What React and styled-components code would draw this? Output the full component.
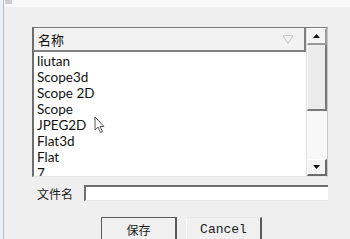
import React from 'react'
import styled, { createGlobalStyle } from 'styled-components'

const Global = createGlobalStyle`
  html, body { margin: 0; padding: 0; }
  body { width: 350px; height: 239px; overflow: hidden; background: #f0f0f0; }
`

const items = ['liutan', 'Scope3d', 'Scope 2D', 'Scope', 'JPEG2D', 'Flat3d', 'Flat', '7']

export default function App() {
  return (
    <Window>
      <Global />
      <TitleStrip>
        <TitleIcon />
      </TitleStrip>
      <Body>
        <ListBox>
          <ListMain>
            <Header>
              <span>名称</span>
              <SortMark viewBox="0 0 12 10">
                <path d="M1 1 L11 1 L6 9 Z" fill="none" stroke="#c4c4c4" strokeWidth="1" />
              </SortMark>
            </Header>
            <Rows>
              {items.map((name) => (
                <Row key={name}>{name}</Row>
              ))}
            </Rows>
          </ListMain>
          <ScrollBar>
            <ArrowBtn>
              <svg width="7" height="4" viewBox="0 0 7 4"><path d="M0 4 L3.5 0 L7 4 Z" fill="#111" /></svg>
            </ArrowBtn>
            <Thumb />
            <Track />
            <ArrowBtn down>
              <svg width="7" height="4" viewBox="0 0 7 4"><path d="M0 0 L3.5 4 L7 0 Z" fill="#111" /></svg>
            </ArrowBtn>
          </ScrollBar>
          <Cursor viewBox="0 0 12 18">
            <path d="M1 1 L1 14 L4 11 L6.5 16.5 L8.5 15.5 L6 10.5 L10 10.5 Z" fill="#fff" stroke="#555" strokeWidth="1" strokeLinejoin="round" />
          </Cursor>
        </ListBox>
        <FileRow>
          <Label>文件名</Label>
          <FileInput />
        </FileRow>
        <Buttons>
          <Button primary>保存</Button>
          <Button mono>Cancel</Button>
        </Buttons>
      </Body>
    </Window>
  )
}

const Window = styled.div`
  width: 347px;
  height: 239px;
  background: #efefef;
  border-left: 1px solid #9cc3de;
  margin-left: 3px;
  box-sizing: border-box;
  overflow: hidden;
`

const TitleStrip = styled.div`
  height: 7px;
  background: #f9f9f9;
  position: relative;
`

const TitleIcon = styled.div`
  position: absolute;
  left: 1px;
  top: 0;
  width: 7px;
  height: 4px;
  background: #cfcfcf;
`

const Body = styled.div`
  padding: 20px 22px 0 28px;
`

const ListBox = styled.div`
  position: relative;
  display: flex;
  height: 150px;
  background: #fff;
  border-top: 1px solid #7a7a7a;
  border-left: 2px solid #6e6e6e;
  border-right: 1px solid #c8c8c8;
  border-bottom: 1px solid #e4e4e4;
  box-sizing: border-box;
`

const ListMain = styled.div`
  flex: 1;
  display: flex;
  flex-direction: column;
  overflow: hidden;
`

const Header = styled.div`
  height: 24px;
  flex: none;
  display: flex;
  align-items: center;
  justify-content: space-between;
  padding: 0 10px 0 4px;
  background: #f2f2f2;
  border-bottom: 2px solid #808080;
  border-right: 2px solid #808080;
  box-sizing: border-box;
  font: 13px "Noto Sans CJK SC", sans-serif;
  color: #111;
`

const SortMark = styled.svg`
  width: 12px;
  height: 11px;
`

const Rows = styled.div`
  padding: 1px 0 0 3px;
`

const Row = styled.div`
  height: 16px;
  font: 13.5px/16px Lato, "Open Sans", sans-serif;
  color: #111;
  white-space: nowrap;
`

const ScrollBar = styled.div`
  width: 20px;
  flex: none;
  display: flex;
  flex-direction: column;
  background: #f6f6f6;
  border-left: 1px solid #e0e0e0;
`

const ArrowBtn = styled.div`
  height: 17px;
  flex: none;
  display: flex;
  align-items: center;
  justify-content: center;
  background: #f4f4f4;
  box-sizing: border-box;
  border: 1px solid #fff;
  border-right: 2px solid ${(p) => (p.down ? '#6a6a6a' : '#9a9a9a')};
  border-bottom: 2px solid ${(p) => (p.down ? '#6a6a6a' : '#9a9a9a')};
`

const Thumb = styled.div`
  height: 66px;
  flex: none;
  background: #ececec;
  box-sizing: border-box;
  border-right: 2px solid #787878;
  border-bottom: 2px solid #787878;
  border-left: 1px solid #fff;
`

const Track = styled.div`
  flex: 1;
  background: #f8f8f8;
`

const Cursor = styled.svg`
  position: absolute;
  left: 60px;
  top: 88px;
  width: 12px;
  height: 18px;
`

const FileRow = styled.div`
  display: flex;
  align-items: center;
  margin-top: 7px;
  height: 18px;
`

const Label = styled.div`
  width: 52px;
  padding-left: 5px;
  box-sizing: border-box;
  font: 12px "Noto Sans CJK SC", sans-serif;
  color: #1a1a1a;
`

const FileInput = styled.div`
  flex: 1;
  height: 16px;
  background: #fff;
  border-top: 2px solid #6e6e6e;
  border-left: 2px solid #6e6e6e;
  border-bottom: 1px solid #e8e8e8;
  box-sizing: border-box;
`

const Buttons = styled.div`
  display: flex;
  gap: 9px;
  padding-left: 69px;
  margin-top: 15px;
`

const Button = styled.div`
  width: 76px;
  height: 24px;
  box-sizing: border-box;
  display: flex;
  align-items: center;
  justify-content: center;
  background: #f0f0f0;
  border: 1px solid ${(p) => (p.primary ? '#5a5a5a' : '#fafafa')};
  border-right: 2px solid #5a5a5a;
  border-top: 1px solid ${(p) => (p.primary ? '#5a5a5a' : '#e6e6e6')};
  font: ${(p) => (p.mono ? '13px "Liberation Mono", monospace' : '12px "Noto Sans CJK SC", sans-serif')};
  color: #1a1a1a;
`
